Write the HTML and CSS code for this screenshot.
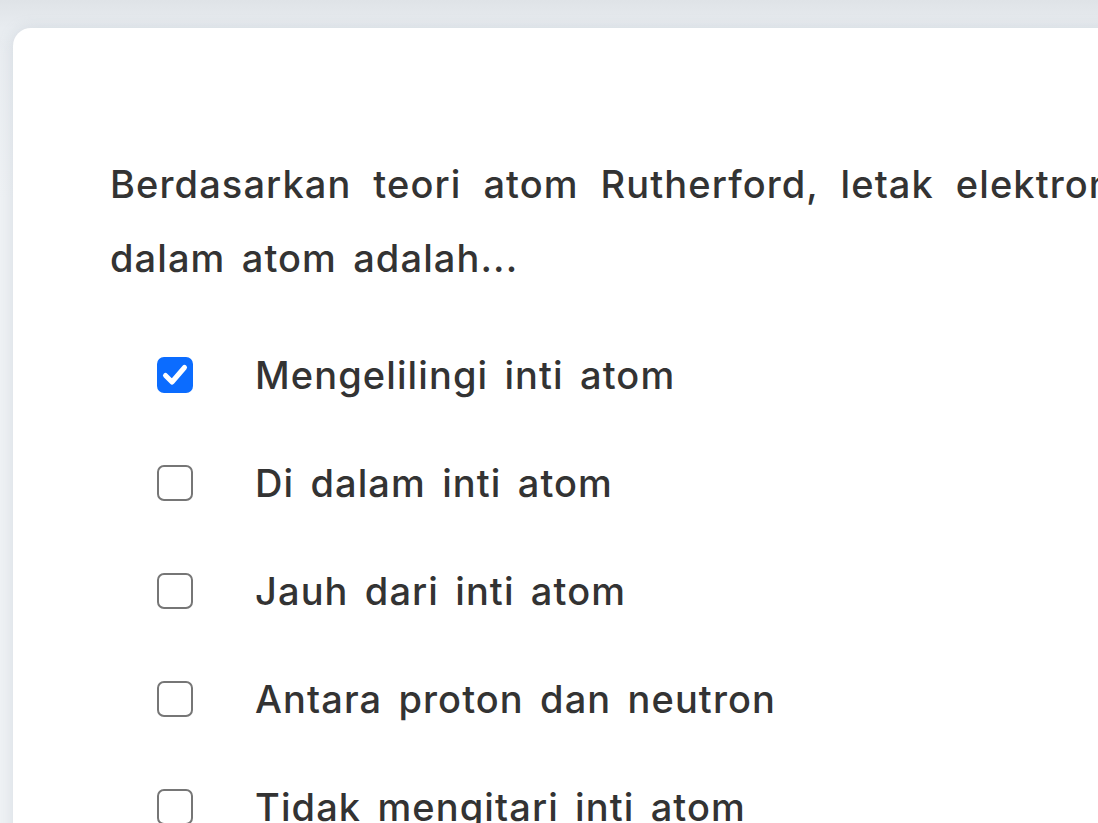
FILE: index.html
```html
<!DOCTYPE html>
<html lang="id">
<head>
<meta charset="utf-8">
<title>Soal</title>
<link rel="stylesheet" href="styles.css">
</head>
<body>
<div class="page">
  <div class="card">
    <p class="question">Berdasarkan teori atom Rutherford, letak elektron di dalam atom adalah...</p>
    <ul class="options">
      <li class="option"><span class="box checked"><svg viewBox="0 0 36 36" width="36" height="36"><path d="M8.5 18.5 L15 25 L27.5 10.5" fill="none" stroke="#fff" stroke-width="5" stroke-linecap="round" stroke-linejoin="round"/></svg></span><span class="label">Mengelilingi inti atom</span></li>
      <li class="option"><span class="box"></span><span class="label">Di dalam inti atom</span></li>
      <li class="option"><span class="box"></span><span class="label">Jauh dari inti atom</span></li>
      <li class="option"><span class="box"></span><span class="label">Antara proton dan neutron</span></li>
      <li class="option"><span class="box"></span><span class="label">Tidak mengitari inti atom</span></li>
    </ul>
  </div>
</div>
</body>
</html>
```
FILE: styles.css
```css
html, body {
  margin: 0;
  padding: 0;
  height: 100%;
  overflow: hidden;
}
body {
  background: linear-gradient(180deg, #dfe3e7 0px, #e8ecf0 28px, #eef1f4 200px);
  font-family: Inter, "Noto Sans", sans-serif;
  color: #333333;
}
.page {
  padding: 28px 0 0 13px;
}
.card {
  width: 1300px;
  height: 900px;
  background: #ffffff;
  border-radius: 18px;
  box-shadow: 0 0 14px rgba(150, 165, 180, 0.25);
  padding: 119px 0 0 97px;
  box-sizing: border-box;
}
.question {
  margin: 0;
  width: 1060px;
  font-size: 38px;
  font-weight: 500;
  line-height: 74px;
  letter-spacing: 1.1px;
  word-spacing: 5px;
  text-align: justify;
}
.options {
  list-style: none;
  margin: 0;
  padding: 26px 0 0 47px;
}
.option {
  height: 108px;
  display: flex;
  align-items: center;
}
.box {
  width: 36px;
  height: 36px;
  box-sizing: border-box;
  border: 2.5px solid #767676;
  border-radius: 7px;
  flex: none;
  display: flex;
  align-items: center;
  justify-content: center;
}
.box.checked {
  background: #0b6cff;
  border: none;
}
.label {
  margin-left: 62px;
  font-size: 38px;
  font-weight: 500;
  letter-spacing: 1.1px;
  word-spacing: 5px;
}
```
